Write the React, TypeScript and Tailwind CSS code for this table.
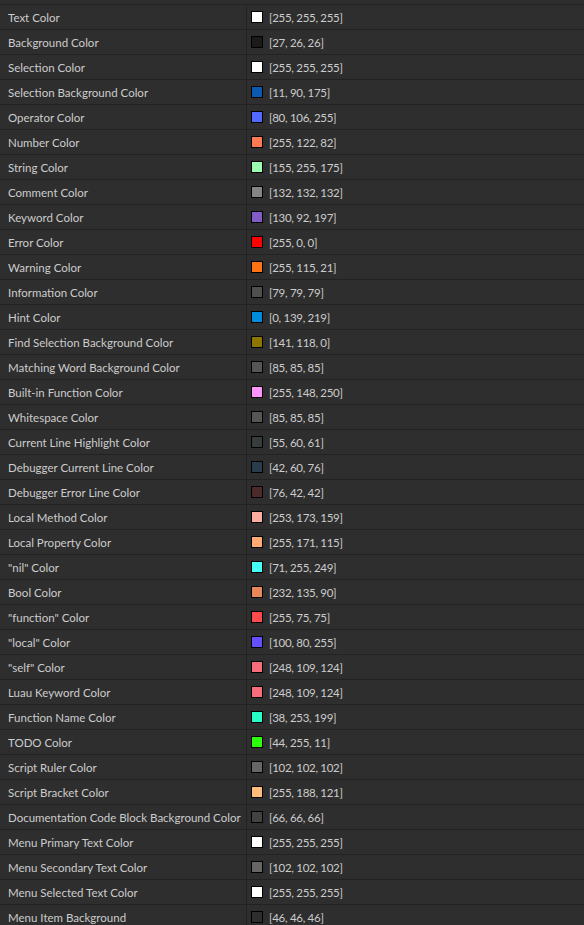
const ROWS: [string, [number, number, number]][] = [
  ["Text Color", [255, 255, 255]],
  ["Background Color", [27, 26, 26]],
  ["Selection Color", [255, 255, 255]],
  ["Selection Background Color", [11, 90, 175]],
  ["Operator Color", [80, 106, 255]],
  ["Number Color", [255, 122, 82]],
  ["String Color", [155, 255, 175]],
  ["Comment Color", [132, 132, 132]],
  ["Keyword Color", [130, 92, 197]],
  ["Error Color", [255, 0, 0]],
  ["Warning Color", [255, 115, 21]],
  ["Information Color", [79, 79, 79]],
  ["Hint Color", [0, 139, 219]],
  ["Find Selection Background Color", [141, 118, 0]],
  ["Matching Word Background Color", [85, 85, 85]],
  ["Built-in Function Color", [255, 148, 250]],
  ["Whitespace Color", [85, 85, 85]],
  ["Current Line Highlight Color", [55, 60, 61]],
  ["Debugger Current Line Color", [42, 60, 76]],
  ["Debugger Error Line Color", [76, 42, 42]],
  ["Local Method Color", [253, 173, 159]],
  ["Local Property Color", [255, 171, 115]],
  ['"nil" Color', [71, 255, 249]],
  ["Bool Color", [232, 135, 90]],
  ['"function" Color', [255, 75, 75]],
  ['"local" Color', [100, 80, 255]],
  ['"self" Color', [248, 109, 124]],
  ["Luau Keyword Color", [248, 109, 124]],
  ["Function Name Color", [38, 253, 199]],
  ["TODO Color", [44, 255, 11]],
  ["Script Ruler Color", [102, 102, 102]],
  ["Script Bracket Color", [255, 188, 121]],
  ["Documentation Code Block Background Color", [66, 66, 66]],
  ["Menu Primary Text Color", [255, 255, 255]],
  ["Menu Secondary Text Color", [102, 102, 102]],
  ["Menu Selected Text Color", [255, 255, 255]],
  ["Menu Item Background", [46, 46, 46]],
];

export default function App() {
  return (
    <div
      className="h-[925px] w-[584px] overflow-hidden bg-[#2e2e2e] pt-1 text-[11.5px] text-[#cccccc]"
      style={{ fontFamily: "Lato, sans-serif" }}
    >
      {ROWS.map(([label, rgb]) => (
        <div key={label} className="flex h-[25px] border-t border-[#222222]">
          <div className="flex w-[247px] items-center border-r border-[#222222] pl-2 pt-px whitespace-nowrap">
            {label}
          </div>
          <div className="flex items-center gap-[6px] pl-1">
            <span
              className="h-3 w-3 border border-black"
              style={{ backgroundColor: `rgb(${rgb.join(",")})` }}
            />
            <span className="pt-px tracking-[-0.3px]">[{rgb.join(", ")}]</span>
          </div>
        </div>
      ))}
    </div>
  );
}
